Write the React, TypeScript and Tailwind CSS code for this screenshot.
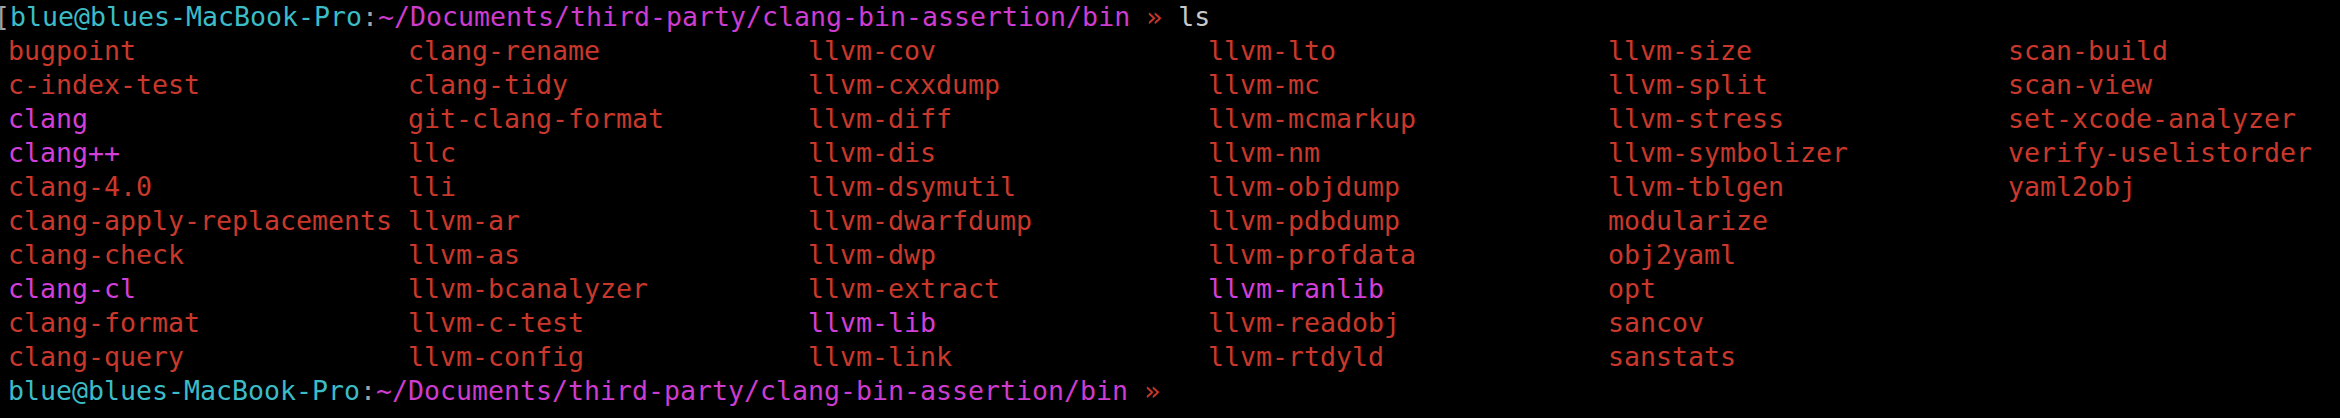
const columns: string[][] = [
  ['bugpoint', 'c-index-test', 'clang', 'clang++', 'clang-4.0', 'clang-apply-replacements', 'clang-check', 'clang-cl', 'clang-format', 'clang-query'],
  ['clang-rename', 'clang-tidy', 'git-clang-format', 'llc', 'lli', 'llvm-ar', 'llvm-as', 'llvm-bcanalyzer', 'llvm-c-test', 'llvm-config'],
  ['llvm-cov', 'llvm-cxxdump', 'llvm-diff', 'llvm-dis', 'llvm-dsymutil', 'llvm-dwarfdump', 'llvm-dwp', 'llvm-extract', 'llvm-lib', 'llvm-link'],
  ['llvm-lto', 'llvm-mc', 'llvm-mcmarkup', 'llvm-nm', 'llvm-objdump', 'llvm-pdbdump', 'llvm-profdata', 'llvm-ranlib', 'llvm-readobj', 'llvm-rtdyld'],
  ['llvm-size', 'llvm-split', 'llvm-stress', 'llvm-symbolizer', 'llvm-tblgen', 'modularize', 'obj2yaml', 'opt', 'sancov', 'sanstats'],
  ['scan-build', 'scan-view', 'set-xcode-analyzer', 'verify-uselistorder', 'yaml2obj'],
];

// symlinks show up magenta in ls -G
const links = new Set(['clang', 'clang++', 'clang-cl', 'llvm-lib', 'llvm-ranlib']);

function Prompt({ command, bracket }: { command?: string; bracket?: boolean }) {
  return (
    <div className="h-[34px] flex items-center whitespace-pre">
      {bracket && <span className="-ml-[14px] text-[#a3a3a3]">[</span>}
      <span className="text-[#3cbcc6]">blue@blues-MacBook-Pro</span>
      <span className="text-[#a3a3a3]">:</span>
      <span className="text-[#cc3ccf]">~/Documents/third-party/clang-bin-assertion/bin</span>
      <span className="text-[#c9382b]"> » </span>
      {command && <span className="text-[#c8c8c8]">{command}</span>}
    </div>
  );
}

export default function App() {
  return (
    <div
      className="w-[2340px] h-[418px] bg-black overflow-hidden pl-[8px] text-[26.58px] leading-[34px]"
      style={{ fontFamily: '"DejaVu Sans Mono", "Liberation Mono", monospace' }}
    >
      <Prompt command="ls" bracket />
      <div className="grid grid-flow-col grid-rows-[repeat(10,34px)] grid-cols-[repeat(6,400px)]">
        {columns.flat().map((name) => (
          <div
            key={name}
            className={`h-[34px] flex items-center whitespace-pre ${
              links.has(name) ? 'text-[#d23fd6]' : 'text-[#c9382b]'
            }`}
          >
            {name}
          </div>
        ))}
      </div>
      <Prompt />
    </div>
  );
}
